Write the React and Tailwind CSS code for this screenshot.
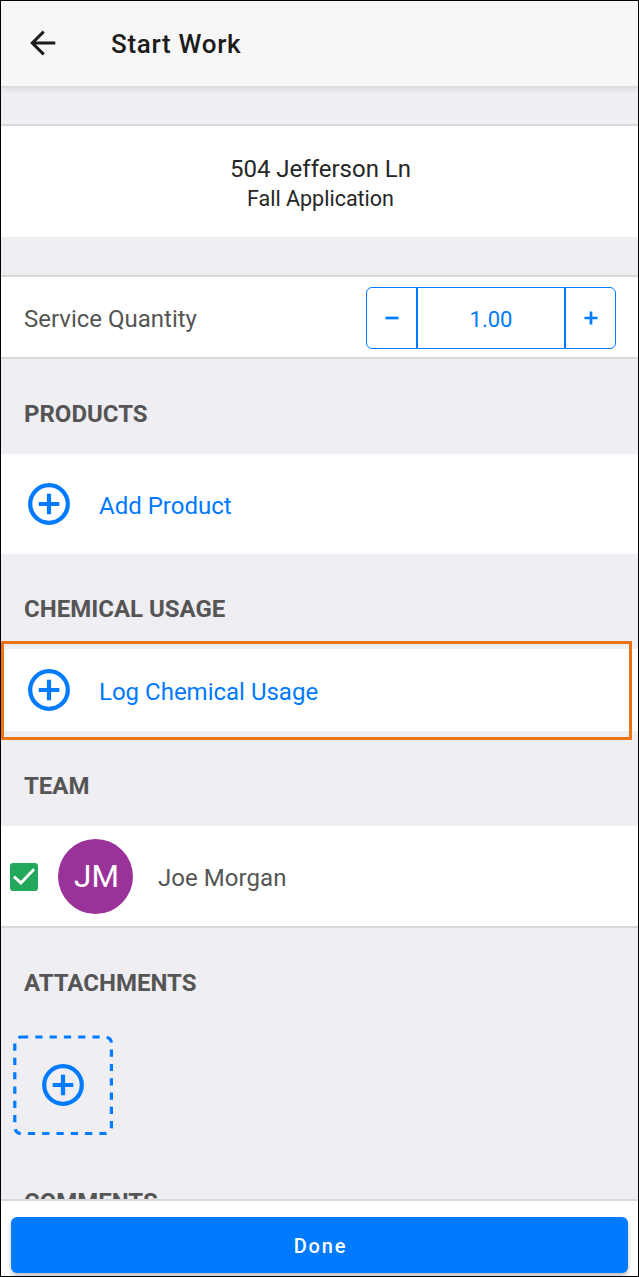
import React, { useState } from "react";

const ArrowBack = () => (
  <svg
    xmlns="http://www.w3.org/2000/svg"
    className="mb-[2px] h-[26px] w-[26px]"
    fill="none"
    viewBox="0 0 26 26"
    stroke="#1c1c1c"
    strokeWidth="3"
  >
    <path d="M25.3 13H2.6M13.7 1.6L2.3 13l11.4 11.4" />
  </svg>
);

const PlusCircle = () => (
  <svg
    xmlns="http://www.w3.org/2000/svg"
    className="h-[42px] w-[42px] shrink-0"
    fill="none"
    viewBox="0 0 42 42"
    stroke="#007aff"
    strokeWidth="4.2"
  >
    <circle cx="21" cy="21" r="18.8" />
    <path d="M21 10.7v20.6M10.7 21h20.6" />
  </svg>
);

const SectionTitle = ({ children }) => (
  <h2 className="flex h-[95px] items-center pl-[23px] pt-[15px] text-[24px] leading-[28px] font-bold text-[#555555]">
    {children}
  </h2>
);

const AddRow = ({ label, className }) => (
  <button
    className={`flex w-full items-center bg-white pl-[27px] text-[24px] text-[#007aff] ${className}`}
  >
    <PlusCircle />
    <span className="ml-[29px] pt-[4px]">{label}</span>
  </button>
);

const App = () => {
  const [quantity, setQuantity] = useState(1);
  const [checked, setChecked] = useState(true);

  return (
    <div className="flex h-[1277px] w-[639px] flex-col overflow-hidden border border-black bg-[#efeef3] font-[Roboto,sans-serif] text-[#262626]">
      <header className="z-10 flex h-[87px] shrink-0 items-center border-b-2 border-[#dcdcde] bg-[#f7f7f7] pl-[29px] shadow-[0_2px_5px_rgba(0,0,0,0.07)]">
        <button aria-label="Back">
          <ArrowBack />
        </button>
        <h1 className="ml-[55px] pt-[2px] text-[26px] font-medium tracking-[0.7px] text-[#1c1c1c]">
          Start Work
        </h1>
      </header>

      <main className="min-h-0 flex-1 overflow-hidden">
        <div className="mt-[36px] flex h-[113px] flex-col items-center border-t-2 border-[#d9d9db] bg-white pt-[28px] pl-[2px]">
          <p className="text-[24px] leading-[30px]">504 Jefferson Ln</p>
          <p className="text-[21.5px] leading-[30px]">Fall Application</p>
        </div>

        <div className="mt-[38px] flex h-[84px] items-center justify-between border-y-2 border-[#d9d9db] bg-white pl-[23px] pr-[22px]">
          <span className="pt-[3px] text-[24px] text-[#555555]">
            Service Quantity
          </span>
          <div className="mt-[2px] flex h-[62px] w-[250px] rounded-[6px] border-[1.5px] border-[#007aff] text-[#007aff]">
            <button
              aria-label="Decrease"
              className="flex w-[49px] items-center justify-center"
              onClick={() => setQuantity(Math.max(0, quantity - 1))}
            >
              <svg className="h-[14px] w-[14px]" viewBox="0 0 14 14" stroke="currentColor" strokeWidth="2.7">
                <path d="M.5 7h13" />
              </svg>
            </button>
            <div className="flex flex-1 items-center justify-center border-x-2 border-[#007aff] pt-[2px] text-[22px]">
              {quantity.toFixed(2)}
            </div>
            <button
              aria-label="Increase"
              className="flex w-[49px] items-center justify-center"
              onClick={() => setQuantity(quantity + 1)}
            >
              <svg className="h-[14px] w-[14px]" viewBox="0 0 14 14" stroke="currentColor" strokeWidth="2.7">
                <path d="M.5 7h13M7 .5v13" />
              </svg>
            </button>
          </div>
        </div>

        <SectionTitle>PRODUCTS</SectionTitle>
        <AddRow label="Add Product" className="h-[100px]" />

        <SectionTitle>CHEMICAL USAGE</SectionTitle>
        <div className="relative">
          <AddRow label="Log Chemical Usage" className="h-[82px]" />
          {/* highlight around the row */}
          <div className="pointer-events-none absolute -top-[8px] left-0 h-[99px] w-[631px] border-3 border-[#eb7314]" />
        </div>

        <SectionTitle>TEAM</SectionTitle>
        <div className="flex h-[102px] items-center border-b-2 border-[#d9d9db] bg-white pl-[9px]">
          <button
            aria-label="Joe Morgan"
            className="mt-[1px] flex h-[28px] w-[28px] items-center justify-center rounded-[3px] bg-[#21a85b]"
            onClick={() => setChecked(!checked)}
          >
            {checked && (
              <svg className="h-[28px] w-[28px]" viewBox="0 0 28 28" fill="none" stroke="white" strokeWidth="2.9">
                <path d="M4 13.7l6.9 6.2L24 6.3" />
              </svg>
            )}
          </button>
          <div className="ml-[20px] flex h-[75px] w-[75px] items-center justify-center rounded-full bg-[#993399] pt-[1px] pl-[2px] text-[31.5px] text-white">
            JM
          </div>
          <span className="ml-[25px] pt-[4px] text-[24px] tracking-[0.05px] text-[#555555]">
            Joe Morgan
          </span>
        </div>

        <SectionTitle>ATTACHMENTS</SectionTitle>
        <button
          aria-label="Add attachment"
          className="ml-[12px] mt-[12px] grid h-[100px] w-[100px] place-items-center"
        >
          <svg
            className="col-start-1 row-start-1 h-[100px] w-[100px]"
            viewBox="0 0 100 100"
            fill="none"
            stroke="#007aff"
            strokeWidth="3.2"
            strokeDasharray="7.2 7.1"
          >
            <rect x="1.8" y="2" width="96.6" height="96.5" rx="6.2" />
          </svg>
          <span className="col-start-1 row-start-1">
            <PlusCircle />
          </span>
        </button>

        <h2 className="mt-[53px] pl-[23px] text-[24px] leading-[28px] font-bold text-[#555555]">
          COMMENTS
        </h2>
      </main>

      <footer className="h-[77px] shrink-0 border-t-2 border-[#d9d9db] bg-white px-[10px] pt-[16px]">
        <button className="flex h-[56px] w-full items-center justify-center rounded-[6px] bg-[#007aff] pt-[1px] pl-[2px] text-[20px] font-medium tracking-[1.8px] text-white shadow-[0_3px_4px_rgba(0,0,0,0.25)]">
          Done
        </button>
      </footer>
    </div>
  );
};

export default App;
